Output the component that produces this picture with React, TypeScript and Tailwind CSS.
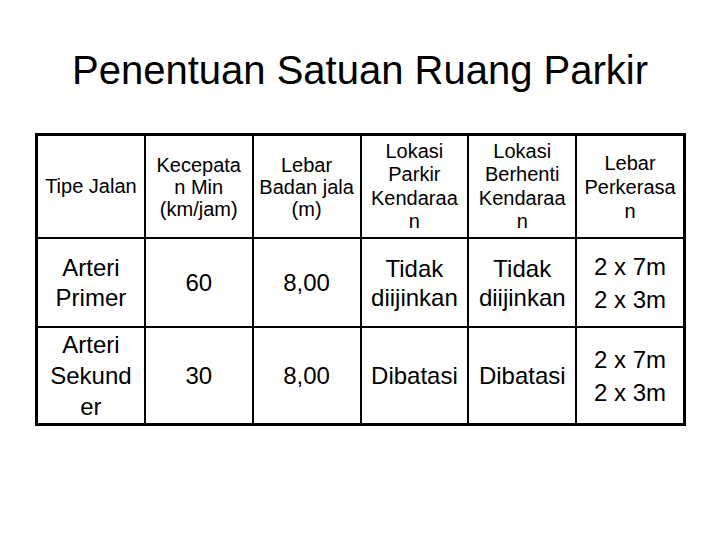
import React from "react";

const H = ({ lines, lh = "leading-[23px]" }: { lines: string[]; lh?: string }) => (
  <div className={`bg-white flex items-center justify-center text-center text-[20px] ${lh}`}>
    <div>
      {lines.map((l, i) => (
        <div key={i}>{l}</div>
      ))}
    </div>
  </div>
);

const B = ({ lines, lh = "leading-[29px]" }: { lines: string[]; lh?: string }) => (
  <div className={`bg-white flex items-center justify-center text-center text-[24px] ${lh}`}>
    <div>
      {lines.map((l, i) => (
        <div key={i}>{l}</div>
      ))}
    </div>
  </div>
);

export default function App() {
  return (
    <div
      className="w-[720px] h-[540px] bg-white text-black relative overflow-hidden"
      style={{ fontFamily: '"Liberation Sans", Arial, sans-serif' }}
    >
      <div className="pt-[45px] text-center text-[40px] leading-[50px]">Penentuan Satuan Ruang Parkir</div>
      <div className="ml-[35px] mt-[38px] w-[651px] border-[3px] border-black bg-black grid grid-cols-6 grid-rows-[101px_87px_95px] gap-[2px]">
        <H lines={["Tipe Jalan"]} />
        <H lines={["Kecepata", "n Min", "(km/jam)"]} lh="leading-[22px]" />
        <H lines={["Lebar", "Badan jala", "(m)"]} lh="leading-[22px]" />
        <H lines={["Lokasi", "Parkir", "Kendaraa", "n"]} lh="leading-[23.5px]" />
        <H lines={["Lokasi", "Berhenti", "Kendaraa", "n"]} lh="leading-[23.5px]" />
        <H lines={["Lebar", "Perkerasa", "n"]} lh="leading-[24px]" />

        <B lines={["Arteri", "Primer"]} lh="leading-[30px]" />
        <B lines={["60"]} />
        <B lines={["8,00"]} />
        <B lines={["Tidak", "diijinkan"]} />
        <B lines={["Tidak", "diijinkan"]} />
        <B lines={["2 x 7m", "2 x 3m"]} lh="leading-[33px]" />

        <B lines={["Arteri", "Sekund", "er"]} lh="leading-[31px]" />
        <B lines={["30"]} />
        <B lines={["8,00"]} />
        <B lines={["Dibatasi"]} />
        <B lines={["Dibatasi"]} />
        <B lines={["2 x 7m", "2 x 3m"]} lh="leading-[33px]" />
      </div>
    </div>
  );
}
